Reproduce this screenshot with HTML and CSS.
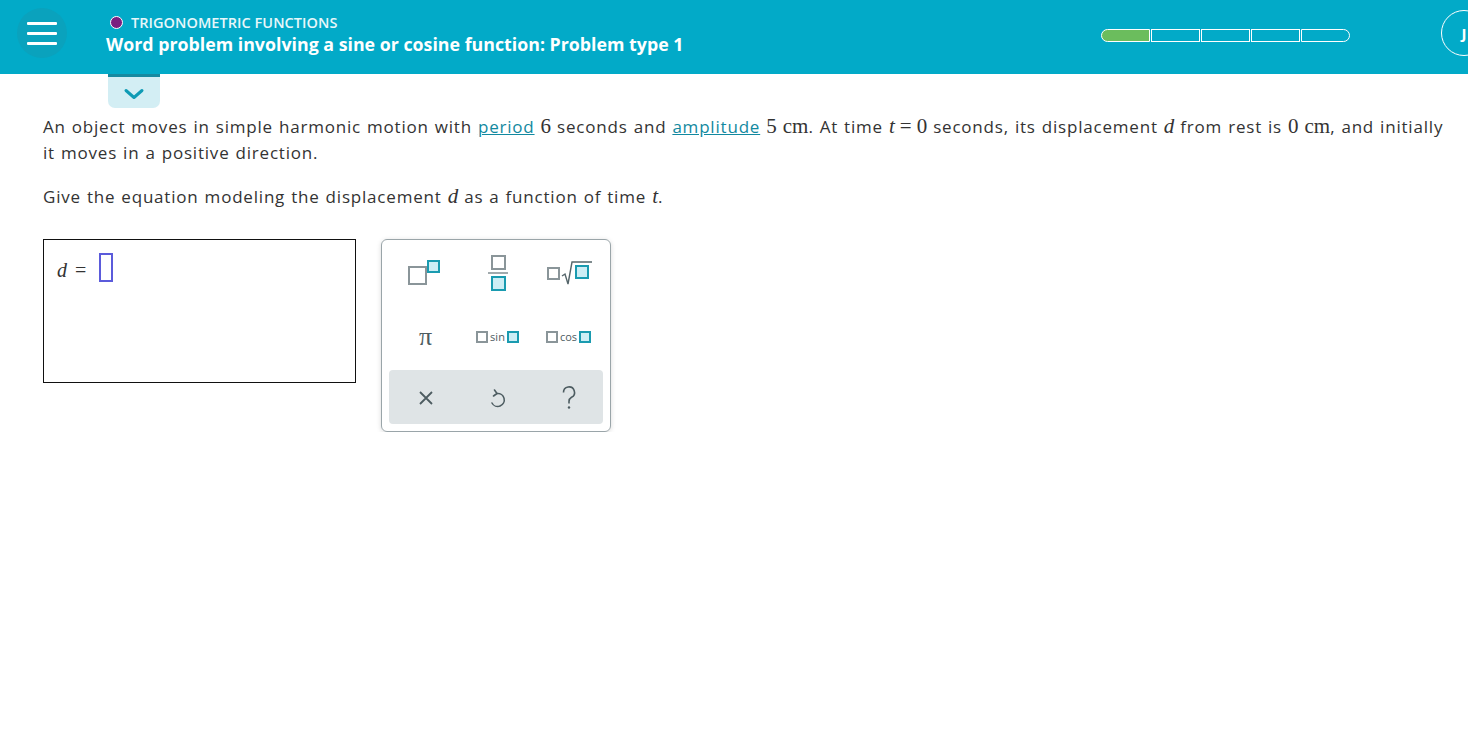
FILE: index.html
```html
<!DOCTYPE html>
<html>
<head>
<meta charset="utf-8">
<link rel="stylesheet" href="styles.css">
</head>
<body>
<header class="topbar">
  <div class="menu-btn">
    <span></span><span></span><span></span>
  </div>
  <div class="titles">
    <div class="topic"><span class="dot"></span>TRIGONOMETRIC FUNCTIONS</div>
    <div class="title">Word problem involving a sine or cosine function: Problem type 1</div>
  </div>
  <div class="progress">
    <span class="seg done"></span><span class="seg"></span><span class="seg"></span><span class="seg"></span><span class="seg last"></span>
  </div>
  <div class="avatar">J</div>
</header>
<div class="tab">
  <svg width="22" height="14" viewBox="0 0 22 14"><path d="M3 3.5 L11 10.5 L19 3.5" fill="none" stroke="#0f9bb5" stroke-width="3" stroke-linecap="round" stroke-linejoin="round"/></svg>
</div>
<main class="content">
  <p class="para">An object moves in simple harmonic motion with <a class="link">period</a> <span class="m">6</span> seconds and <a class="link">amplitude</a> <span class="m">5<span class="sp"></span>cm</span>. At time <span class="m"><i>t</i><span class="op">=</span>0</span> seconds, its displacement <span class="m"><i>d</i></span> from rest is <span class="m">0<span class="sp"></span>cm</span>, and initially it moves in a positive direction.</p>
  <p class="para q">Give the equation modeling the displacement <span class="m"><i>d</i></span> as a function of time <span class="m"><i>t</i></span>.</p>
  <div class="work">
    <div class="answer">
      <span class="m eq"><i>d</i><span class="op">=</span></span><span class="cursor"></span>
    </div>
    <div class="keypad">
      <div class="keys">
        <div class="key">
          <svg width="36" height="26" viewBox="0 0 36 26"><rect x="1" y="7" width="17" height="17" fill="none" stroke="#8a9599" stroke-width="2"/><rect x="20" y="1" width="11" height="11" fill="#cdeef5" stroke="#1a9bb0" stroke-width="2"/></svg>
        </div>
        <div class="key">
          <svg width="22" height="36" viewBox="0 0 22 36"><rect x="5" y="1" width="13" height="13" fill="none" stroke="#8a9599" stroke-width="2"/><line x1="1" y1="18" x2="21" y2="18" stroke="#8a9599" stroke-width="1.6"/><rect x="5" y="22" width="13" height="13" fill="#cdeef5" stroke="#1a9bb0" stroke-width="2"/></svg>
        </div>
        <div class="key">
          <svg width="46" height="26" viewBox="0 0 46 26"><rect x="1" y="8" width="11" height="11" fill="none" stroke="#8a9599" stroke-width="2"/><path d="M15 16 L18 14 L21 24 L25 2 L45 2" fill="none" stroke="#55656a" stroke-width="1.4"/><rect x="29" y="6" width="12" height="12" fill="#cdeef5" stroke="#1a9bb0" stroke-width="2"/></svg>
        </div>
        <div class="key pi">π</div>
        <div class="key fn"><span class="bx"></span><span class="fname">sin</span><span class="bx t"></span></div>
        <div class="key fn"><span class="bx"></span><span class="fname">cos</span><span class="bx t"></span></div>
      </div>
      <div class="actions">
        <div class="act">
          <svg width="16" height="16" viewBox="0 0 16 16"><path d="M2 2 L14 14 M14 2 L2 14" stroke="#4d5c61" stroke-width="1.8" fill="none"/></svg>
        </div>
        <div class="act">
          <svg width="18" height="22" viewBox="0 0 18 22"><path d="M8 6.5 A6.5 6.5 0 1 1 3 16" fill="none" stroke="#4d5c61" stroke-width="1.6" stroke-linecap="round"/><path d="M5.5 3 L8 6.5 L4.5 9" fill="none" stroke="#4d5c61" stroke-width="1.6" stroke-linecap="round" stroke-linejoin="round"/></svg>
        </div>
        <div class="act">
          <svg width="16" height="26" viewBox="0 0 16 26"><path d="M2.5 7.5 A5.5 5.5 0 1 1 10.5 12.3 C8.8 13.3 8 14.5 8 16.5 L8 18.5" fill="none" stroke="#4d5c61" stroke-width="1.6"/><circle cx="8" cy="22.5" r="1.2" fill="#4d5c61"/></svg>
        </div>
      </div>
    </div>
  </div>
</main>
</body>
</html>
```

FILE: styles.css
```css
* { box-sizing: border-box; }
html, body { margin: 0; padding: 0; background: #fff; }
body { font-family: "Open Sans", "Noto Sans", sans-serif; color: #333; overflow: hidden; }

.topbar {
  height: 74px;
  background: #02aac8;
  display: flex;
  align-items: flex-start;
}
.menu-btn {
  width: 50px; height: 50px;
  margin: 8px 0 0 17px;
  border-radius: 50%;
  background: #0aa2bd;
  display: flex; flex-direction: column; align-items: center; justify-content: center;
  gap: 7px;
}
.menu-btn span { display: block; width: 30px; height: 3px; background: #fff; border-radius: 1px; }
.titles { margin: 12px 0 0 39px; font-family: "Open Sans", sans-serif; color: #fff; }
.topic { display: flex; align-items: center; font-size: 14.5px; font-weight: 600; letter-spacing: 0.05px; color: #e7f7fa; height: 20px; }
.dot { width: 13px; height: 13px; border-radius: 50%; background: #7a1f80; border: 1.5px solid #fff; margin: 0 8px 0 4px; }
.title { font-size: 17.8px; font-weight: 700; margin-top: 0; }
.progress { display: flex; margin: 29px 0 0 auto; }
.seg { width: 49px; height: 13px; border: 1.5px solid #fff; margin-right: 1px; }
.seg.done { background: #6bbd5d; border-radius: 7px 0 0 7px; }
.seg.last { border-radius: 0 7px 7px 0; margin-right: 0; }
.avatar {
  width: 46px; height: 46px;
  margin: 10px -19px 0 91px;
  border: 1.5px solid #fff; border-radius: 50%;
  color: #fff; font-family: "Open Sans", sans-serif; font-weight: 700; font-size: 15px;
  display: flex; align-items: center; justify-content: center;
  flex-shrink: 0;
}

.tab {
  margin-left: 108px;
  width: 52px; height: 34px;
  background: #d3eef4;
  border-top: 3px solid #1689a0;
  border-radius: 0 0 7px 7px;
  display: flex; align-items: center; justify-content: center;
  padding-top: 2px;
}

.content { padding-left: 43px; }
.para { margin: 6px 0 0 0; font-size: 17px; letter-spacing: 0.8px; word-spacing: 0.8px; line-height: 26px; width: 1414px; }
.para.q { margin-top: 18px; }
.link { color: #1289a0; text-decoration: underline; }
.m { font-family: "Liberation Serif", "Times New Roman", serif; font-size: 21px; letter-spacing: 0; word-spacing: 0; line-height: 20px; }
.m i { font-style: italic; }
.op { margin: 0 5px; }
.sp { display: inline-block; width: 6px; }

.work { display: flex; align-items: flex-start; margin-top: 29px; }
.answer {
  width: 313px; height: 144px;
  border: 1px solid #111;
  padding: 13px 0 0 13px;
  display: flex; align-items: flex-start;
}
.eq { font-size: 20px; color: #333; margin-top: 5px; white-space: pre; line-height: 24px; }
.eq .op { margin: 0 5px 0 8px; }
.cursor { width: 14px; height: 29px; border: 2px solid #5b5bdb; margin-left: 8px; }

.keypad {
  margin-left: 25px;
  width: 230px; height: 193px;
  border: 1px solid #9aa5a9;
  border-radius: 6px;
  box-shadow: 0 1px 5px rgba(0,0,0,0.15);
  padding: 0 7px 7px 7px;
}
.keys { display: grid; grid-template-columns: 73px 71px 71px; grid-template-rows: 66px 62px; }
.key { display: flex; align-items: center; justify-content: center; }
.key:nth-child(3) svg { margin-left: 2px; }
.pi { font-family: "Liberation Serif", serif; font-size: 26px; color: #4d5c61; }
.fn { font-family: "Open Sans", sans-serif; font-size: 11px; color: #4d5c61; gap: 1px; }
.bx { display: inline-block; width: 12px; height: 12px; border: 2px solid #8a9599; }
.bx.t { background: #cdeef5; border-color: #1a9bb0; }
.fname { margin: 0 1px; position: relative; top: -1px; }
.actions {
  margin-top: 2px;
  height: 54px;
  background: #dfe4e6;
  border-radius: 4px;
  display: grid; grid-template-columns: 73px 71px 71px;
}
.act { display: flex; align-items: center; justify-content: center; padding-top: 2px; }
```
